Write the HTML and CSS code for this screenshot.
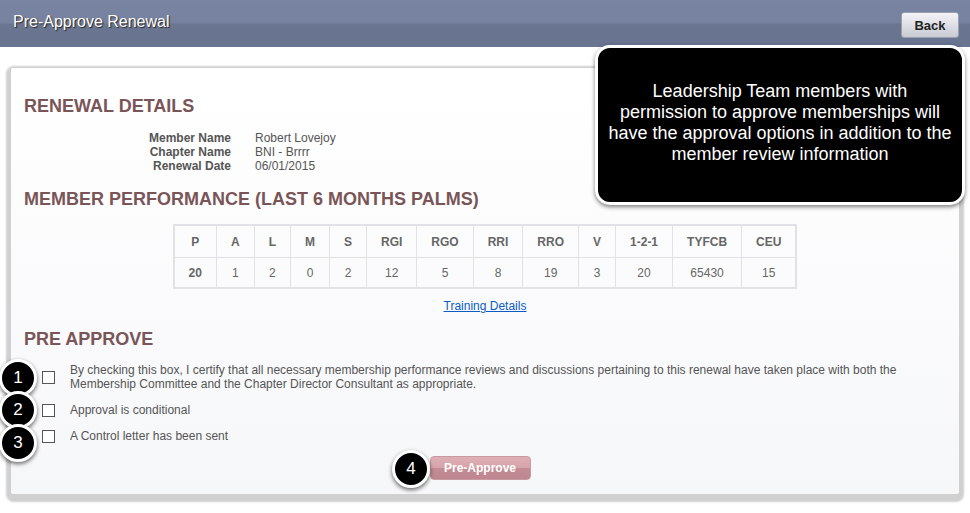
FILE: index.html
```html
<!DOCTYPE html>
<html lang="en">
<head>
    <meta charset="UTF-8">
    <title>Pre-Approve Renewal</title>
    <link rel="stylesheet" href="styles.css">
</head>
<body>
    <div class="topbar">
        <h1>Pre-Approve Renewal</h1>
        <button class="back-btn">Back</button>
    </div>

    <div class="card">
        <h2>RENEWAL DETAILS</h2>
        <div class="details">
            <div class="label">Member Name</div>
            <div>Robert Lovejoy</div>
            <div class="label">Chapter Name</div>
            <div>BNI - Brrrr</div>
            <div class="label">Renewal Date</div>
            <div>06/01/2015</div>
        </div>

        <h2>MEMBER PERFORMANCE (LAST 6 MONTHS PALMS)</h2>
        <table class="palms">
            <tr>
                <th>P</th><th>A</th><th>L</th><th>M</th><th>S</th><th>RGI</th><th>RGO</th>
                <th>RRI</th><th>RRO</th><th>V</th><th>1-2-1</th><th>TYFCB</th><th>CEU</th>
            </tr>
            <tr>
                <td class="strong">20</td><td>1</td><td>2</td><td>0</td><td>2</td><td>12</td><td>5</td>
                <td>8</td><td>19</td><td>3</td><td>20</td><td>65430</td><td>15</td>
            </tr>
        </table>
        <div class="training"><a href="#">Training Details</a></div>

        <h2>PRE APPROVE</h2>
        <div class="checks">
            <label class="check-row">
                <span class="box"></span>
                <span>By checking this box, I certify that all necessary membership performance reviews and discussions pertaining to this renewal have taken place with both the Membership Committee and the Chapter Director Consultant as appropriate.</span>
            </label>
            <label class="check-row">
                <span class="box"></span>
                <span>Approval is conditional</span>
            </label>
            <label class="check-row">
                <span class="box"></span>
                <span>A Control letter has been sent</span>
            </label>
        </div>
        <div class="actions">
            <button class="approve-btn">Pre-Approve</button>
        </div>
    </div>

    <!-- annotation overlays -->
    <div class="callout">
        <p>Leadership Team members with<br>
        permission to approve memberships will<br>
        have the approval options in addition to the<br>
        member review information</p>
    </div>
    <div class="step step-1">1</div>
    <div class="step step-2">2</div>
    <div class="step step-3">3</div>
    <div class="step step-4">4</div>
</body>
</html>
```

FILE: styles.css
```css
body {
    margin: 0;
    font-family: "Liberation Sans", Arial, sans-serif;
    background: #fff;
    position: relative;
    width: 970px;
    height: 513px;
    overflow: hidden;
}

.topbar {
    height: 47px;
    background: linear-gradient(#7884a0 0%, #7682a0 48%, #6a7590 52%, #687490 100%);
    display: flex;
    align-items: center;
    justify-content: space-between;
    padding: 0 11px 0 13px;
}

.topbar h1 {
    margin: 0;
    margin-top: -3px;
    color: #fff;
    font-size: 16px;
    font-weight: normal;
    text-shadow: 1px 1px 1px #222;
}

.back-btn {
    width: 58px;
    height: 26px;
    margin-top: 3px;
    border: 1px solid #9aa0b0;
    border-radius: 3px;
    background: linear-gradient(#f4f4f7, #c9cbd4);
    font-family: inherit;
    font-size: 13px;
    font-weight: bold;
    color: #222;
    padding: 0;
}

.card {
    margin: 21px 11px 0 11px;
    height: 426px;
    box-sizing: border-box;
    padding: 28px 13px 0 13px;
    border-radius: 3px;
    background: linear-gradient(#fff, #f6f7f9);
    box-shadow: 0 3px 2px 5px #d0d0d0;
}

h2 {
    margin: 0;
    font-size: 18px;
    line-height: 20px;
    color: #7a5558;
}

.details {
    display: grid;
    grid-template-columns: 207px auto;
    column-gap: 24px;
    margin: 15px 0 16px;
    font-size: 12px;
    line-height: 14px;
    color: #555;
}

.details .label {
    text-align: right;
    font-weight: bold;
}

.palms {
    margin: 15px auto 0;
    border-collapse: collapse;
    border: 2px solid #e2e2e6;
    font-size: 12px;
    color: #666;
}

.palms th,
.palms td {
    border: 1px solid #e2e2e6;
    padding: 0 14px;
    text-align: center;
    line-height: 14px;
}

.palms th {
    height: 31px;
}

.palms td {
    height: 29px;
}

.palms .strong {
    font-weight: bold;
}

.training {
    text-align: center;
    font-size: 12px;
    line-height: 14px;
    margin: 10px 0 16px;
}

.training a {
    color: #0a5bc4;
}

.checks {
    margin: 14px 0 0 18px;
    display: flex;
    flex-direction: column;
    gap: 12px;
}

.check-row {
    display: flex;
    align-items: center;
    gap: 15px;
    font-size: 12px;
    line-height: 14px;
    color: #555;
    padding-right: 20px;
}

.box {
    flex: none;
    width: 11px;
    height: 11px;
    border: 1px solid #555;
    background: #fff;
}

.actions {
    text-align: center;
    margin-top: 13px;
    padding-right: 10px;
}

.approve-btn {
    width: 101px;
    height: 24px;
    border: 1px solid #c99aa1;
    border-radius: 4px;
    background: linear-gradient(#deb0b6 0%, #d6a3aa 50%, #c38b93 52%, #be8690 100%);
    color: #fff;
    font-family: inherit;
    font-size: 12px;
    font-weight: bold;
    padding: 0;
}

.callout {
    position: absolute;
    left: 595px;
    top: 45px;
    width: 364px;
    height: 154px;
    border: 3px solid #fff;
    border-radius: 15px;
    background: #000;
    box-shadow: 0 2px 4px rgba(0, 0, 0, 0.5);
    color: #fff;
    font-size: 18px;
    line-height: 21px;
    text-align: center;
    display: flex;
    align-items: center;
    justify-content: center;
}

.callout p {
    margin: -4px 0 0;
    white-space: nowrap;
}

.step {
    position: absolute;
    width: 32px;
    height: 32px;
    border: 3px solid #fff;
    border-radius: 50%;
    background: #000;
    box-shadow: 0 2px 4px rgba(0, 0, 0, 0.6);
    color: #fff;
    font-size: 17px;
    line-height: 32px;
    text-align: center;
}

.step-1 { left: -1px; top: 359px; }
.step-2 { left: -1px; top: 391px; }
.step-3 { left: -1px; top: 424px; }
.step-4 { left: 392px; top: 450px; }
```
